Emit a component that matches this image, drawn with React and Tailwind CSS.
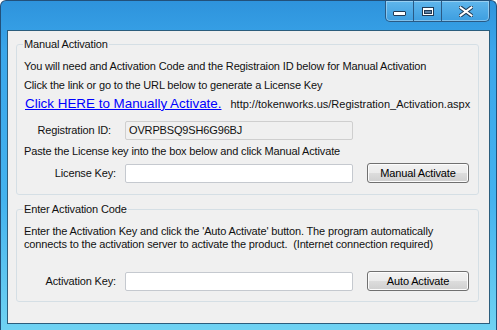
import React from "react";

// Win7 styled push button
function WinButton({ children }) {
  return (
    <div className="w-[102px] h-[20px] rounded-[3px] border border-[#707070] bg-[linear-gradient(#f2f2f2_0%,#ebebeb_50%,#dddddd_50%,#cfcfcf_100%)] shadow-[inset_0_0_0_1px_#fcfcfc] flex items-center justify-center text-[#000]">
      {children}
    </div>
  );
}

function TextBox({ value, readOnly }) {
  return (
    <div
      className={`w-[228px] h-[19px] rounded-[2px] border flex items-center pl-[3px] ${
        readOnly ? "bg-[#f0f0f0] border-[#cfcfcf]" : "bg-white border-[#c5c9cf]"
      }`}
    >
      {value}
    </div>
  );
}

function CaptionButtons() {
  return (
    <div className="flex h-[21px] rounded-b-[5px] border border-t-0 border-[#2a5a85] overflow-hidden shadow-[inset_0_0_0_1px_rgba(255,255,255,0.35)] bg-[linear-gradient(#5fb6ec,#3d9ee0)]">
      <div className="w-[28px] flex items-center justify-center border-r border-[#2a5a85]">
        <div className="w-[13px] h-[5px] mt-[5px] bg-white border border-[#213a55] rounded-[1px]" />
      </div>
      <div className="w-[28px] flex items-center justify-center border-r border-[#2a5a85]">
        <div className="w-[12px] h-[9px] border-[1px] border-[#213a55] bg-white flex items-center justify-center">
          <div className="w-[8px] h-[4px] mt-[1px] bg-[#5a7fa3] border border-[#213a55]" />
        </div>
      </div>
      <div className="w-[47px] flex items-center justify-center">
        <svg width="14" height="11" viewBox="0 0 14 11">
          <path
            d="M1 1 L13 10 M13 1 L1 10"
            stroke="#213a55"
            strokeWidth="4"
            strokeLinecap="square"
          />
          <path
            d="M1.5 1.5 L12.5 9.5 M12.5 1.5 L1.5 9.5"
            stroke="#ffffff"
            strokeWidth="2"
            strokeLinecap="square"
          />
        </svg>
      </div>
    </div>
  );
}

export default function App() {
  return (
    <div
      className="w-[497px] h-[330px] overflow-hidden bg-[linear-gradient(180deg,#2e93dc_0%,#3aa6ea_15%,#43b2ee_60%,#6fd2f2_100%)] border-t border-l border-r border-[#22507a] rounded-t-[6px] flex flex-col text-[11px] tracking-[-0.15px] leading-[14px] text-[#111] whitespace-nowrap"
      style={{ fontFamily: '"Liberation Sans", Arial, sans-serif' }}
    >
      {/* title bar */}
      <div className="h-[29px] flex justify-end pr-[6px]">
        <CaptionButtons />
      </div>

      {/* client area */}
      <div className="ml-[6px] mr-[6px] h-[294px] bg-[#f0f0f0] border border-[#2b5d7c] flex flex-col pl-[8px]">
        {/* Manual Activation group */}
        <fieldset className="mt-[6px] w-[463px] h-[158px] border border-[#d5dfe5] rounded-[3px] pl-[7px] min-w-0">
          <legend className="px-[1px] -ml-[1px] leading-[14px]">Manual Activation</legend>
          <div className="mt-[5px] h-[19px] flex items-center">
            You will need and Activation Code and the Registraion ID below for Manual Activation
          </div>
          <div className="h-[19px] flex items-center">
            Click the link or go to the URL below to generate a License Key
          </div>
          <div className="h-[19px] flex items-center">
            <span className="text-[13.4px] tracking-normal text-[#0000ff] underline ml-[1px]">
              Click HERE to Manually Activate.
            </span>
            <span className="ml-[9px] tracking-normal">http://tokenworks.us/Registration_Activation.aspx</span>
          </div>
          <div className="mt-[8px] h-[18px] flex items-center">
            <div className="w-[101px] flex justify-end pr-[14px]">Registration ID:</div>
            <TextBox value="OVRPBSQ9SH6G96BJ" readOnly />
          </div>
          <div className="h-[24px] flex items-center">
            Paste the License key into the box below and click Manual Activate
          </div>
          <div className="h-[20px] flex items-center">
            <div className="w-[101px] flex justify-end pr-[9px]">License Key:</div>
            <TextBox value="" />
            <div className="ml-[14px]">
              <WinButton>Manual Activate</WinButton>
            </div>
          </div>
        </fieldset>

        {/* Enter Activation Code group */}
        <fieldset className="mt-[7px] w-[463px] h-[100px] border border-[#d5dfe5] rounded-[3px] pl-[7px] min-w-0">
          <legend className="px-[1px] -ml-[1px] leading-[14px]">Enter Activation Code</legend>
          <div className="mt-[9px] leading-[13px]">
            Enter the Activation Key and click the 'Auto Activate' button. The program automatically
            <br />
            connects to the activation server to activate the product.&nbsp; (Internet connection required)
          </div>
          <div className="mt-[20px] h-[20px] flex items-center">
            <div className="w-[101px] flex justify-end pr-[9px]">Activation Key:</div>
            <TextBox value="" />
            <div className="ml-[14px]">
              <WinButton>Auto Activate</WinButton>
            </div>
          </div>
        </fieldset>
      </div>
    </div>
  );
}
